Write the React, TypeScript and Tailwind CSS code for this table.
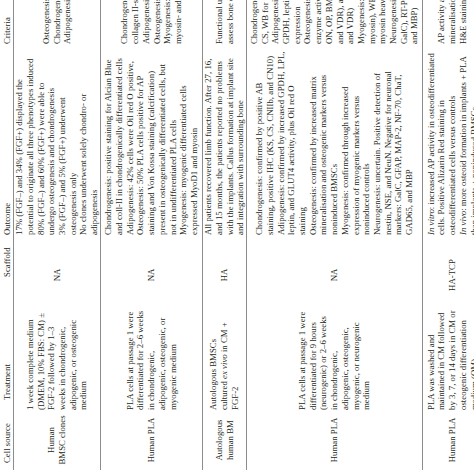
import React from "react";

type Line = React.ReactNode;
type Row = {
  h: string;
  c1: Line[];
  c2: Line[];
  c3: string;
  c4: Line[];
  c5: Line[];
};

const rows: Row[] = [
  {
    h: "h-[87px]",
    c1: ["Human", "BMSC clones"],
    c2: [
      "1 week complete medium",
      "(DMEM, 10% FBS: CM) ±",
      "FGF-2 followed by 1–3",
      "weeks in chondrogenic,",
      "adipogenic, or osteogenic",
      "medium",
    ],
    c3: "NA",
    c4: [
      "17% (FGF–) and 34% (FGF+) displayed the",
      "potential to originate all three phenotypes induced",
      "80% (FGF–) and 60% (FGF+) were able to",
      "undergo osteogenesis and chondrogenesis",
      "3% (FGF–) and 5% (FGF+) underwent",
      "osteogenesis only",
      "No clones underwent solely chondro- or",
      "adipogenesis",
    ],
    c5: [
      "Osteogenesis: analysis of AP activity",
      "Chondrogenesis: Alcian Blue staining",
      "Adipogenesis: Sudan III staining",
    ],
  },
  {
    h: "h-[102px]",
    c1: ["Human PLA"],
    c2: [
      "PLA cells at passage 1 were",
      "differentiated for 2–6 weeks",
      "in chondrogenic,",
      "adipogenic, osteogenic, or",
      "myogenic medium",
    ],
    c3: "NA",
    c4: [
      "Chondrogenesis: positive staining for Alcian Blue",
      "and coll-II in chondrogenically differentiated cells",
      "Adipogenesis: 42% cells were Oil red O positive,",
      "Osteogenesis: 50% PLA cells positive for AP",
      "staining and Von Kossa staining (calcification)",
      "present in osteogenically differentiated cells, but",
      "not in undifferentiated PLA cells",
      "Myogenesis: myogenic differentiated cells",
      "expressed MyoD1 and myosin",
    ],
    c5: [
      "Chondrogenesis: Alcian Blue and",
      "collagen II-specific antibody",
      "Adipogenesis: Oil red O staining",
      "Osteogenesis: AP and Von Kossa staining",
      "Myogenesis: plated cells stained with",
      "myosin- and MyoD1-specific antibodies",
    ],
  },
  {
    h: "h-[44px]",
    c1: ["Autologous", "human BM"],
    c2: [
      "Autologous BMSCs",
      <>
        cultured <i>ex vivo</i> in CM +
      </>,
      "FGF-2",
    ],
    c3: "HA",
    c4: [
      "All patients recovered limb function. After 27, 16,",
      "and 15 months, the patients reported no problems",
      "with the implants. Callus formation at implant site",
      "and integration with surrounding bone",
    ],
    c5: ["Functional use of limb, X-ray to", "assess bone density"],
  },
  {
    h: "h-[176px]",
    c1: ["Human PLA"],
    c2: [
      "PLA cells at passage 1 were",
      "differentiated for 9 hours",
      "(neurogenic) or 2–6 weeks",
      "in chondrogenic,",
      "adipogenic, osteogenic,",
      "myogenic, or neurogenic",
      "medium",
    ],
    c3: "NA",
    c4: [
      "Chondrogenesis: confirmed by positive AB",
      "staining, positive IHC (KS, CS, CNIIb, and CN10)",
      "Adipogenesis: confirmed by increased GPDH, LPL,",
      "leptin, and GLUT4 activity, plus Oil red O",
      "staining",
      "Osteogenesis: confirmed by increased matrix",
      "mineralisation and osteogenic markers versus",
      "noninduced BMSCs",
      "Myogenesis: confirmed through increased",
      "expression of myogenic markers versus",
      "noninduced controls",
      "Neurogenesis: uncertain. Positive detection of",
      "nestin, NSE, and NeuN. Negative for neuronal",
      "markers: GalC, GFAP, MAP-2, NF-70, ChaT,",
      "GAD65, and MBP",
    ],
    c5: [
      "Chondrogenesis: AB staining, IHC for KS,",
      "CS, WB for CN10",
      "Adipogenesis: increased activity of",
      "GPDH, leptin, GLUT4 and LPL gene",
      "expression",
      "Osteogenesis: matrix mineralisation,",
      "enzyme activity, RT-PCR (CBFA-1, AP,",
      "ON, OP, BMP-2, BSP, RXR-α, PTHR,",
      "and VDR), and IHC (OC, ON, OP, BSP,",
      "and VDR)",
      "Myogenesis: RT-PCR (MyoD1, myf5,",
      "myosin), WB (Desmin and MyoD1), IHC for",
      "myosin heavy chain",
      "Neurogenesis: IHC (NSE, NeuN, GFAP,",
      "GalC), RT-PCR (GFAP, GAD65, ChaT,",
      "and MBP)",
    ],
  },
  {
    h: "h-[60px]",
    c1: ["Human PLA"],
    c2: [
      "PLA was washed and",
      "maintained in CM followed",
      "by 3, 7, or 14 days in CM or",
      "osteogenic differentiation",
      "medium (OM)",
    ],
    c3: "HA-TCP",
    c4: [
      <>
        <i>In vitro</i>: increased AP activity in osteodifferentiated
      </>,
      "cells. Positive Alizarin Red staining in",
      "osteodifferentiated cells versus controls",
      <>
        <i>In vivo</i>: more osteoid formation in implants + PLA
      </>,
      "than implants + noninduced BMSCs",
    ],
    c5: ["AP activity and", "mineralisation)", "H&E staining"],
  },
];

function Lines({ items }: { items: Line[] }) {
  return (
    <div>
      {items.map((t, i) => (
        <div key={i} className="whitespace-nowrap">
          {t}
        </div>
      ))}
    </div>
  );
}

export default function App() {
  return (
    <div className="w-[474px] h-[474px] overflow-hidden bg-white">
      <div className="w-[640px] origin-top-left [transform:translateY(474px)_rotate(-90deg)] font-['Liberation_Serif','Times_New_Roman',serif] text-[8.8px] leading-[10.7px] text-[#231f20]">
        <div className="-mt-[4px] h-[14px] flex items-end border-b border-[#8c8c8c] whitespace-nowrap">
          <div className="w-[60px] shrink-0 pl-[7px]">Cell source</div>
          <div className="w-[103px] shrink-0 pl-[10px]">Treatment</div>
          <div className="w-[64px] shrink-0 pl-[30px]">Scaffold</div>
          <div className="w-[199px] shrink-0 pl-[8px]">Outcome</div>
          <div className="w-[200px] shrink-0">Criteria</div>
        </div>
        {rows.map((r, i) => (
          <div key={i} className={`${r.h} flex items-center border-b border-[#8c8c8c]`}>
            <div className="w-[60px] shrink-0 text-center">
              <Lines items={r.c1} />
            </div>
            <div className="w-[103px] shrink-0">
              <Lines items={r.c2} />
            </div>
            <div className="w-[64px] shrink-0 text-center">{r.c3}</div>
            <div className="w-[199px] shrink-0 pl-[8px]">
              <Lines items={r.c4} />
            </div>
            <div className="w-[200px] shrink-0">
              <Lines items={r.c5} />
            </div>
          </div>
        ))}
      </div>
    </div>
  );
}
